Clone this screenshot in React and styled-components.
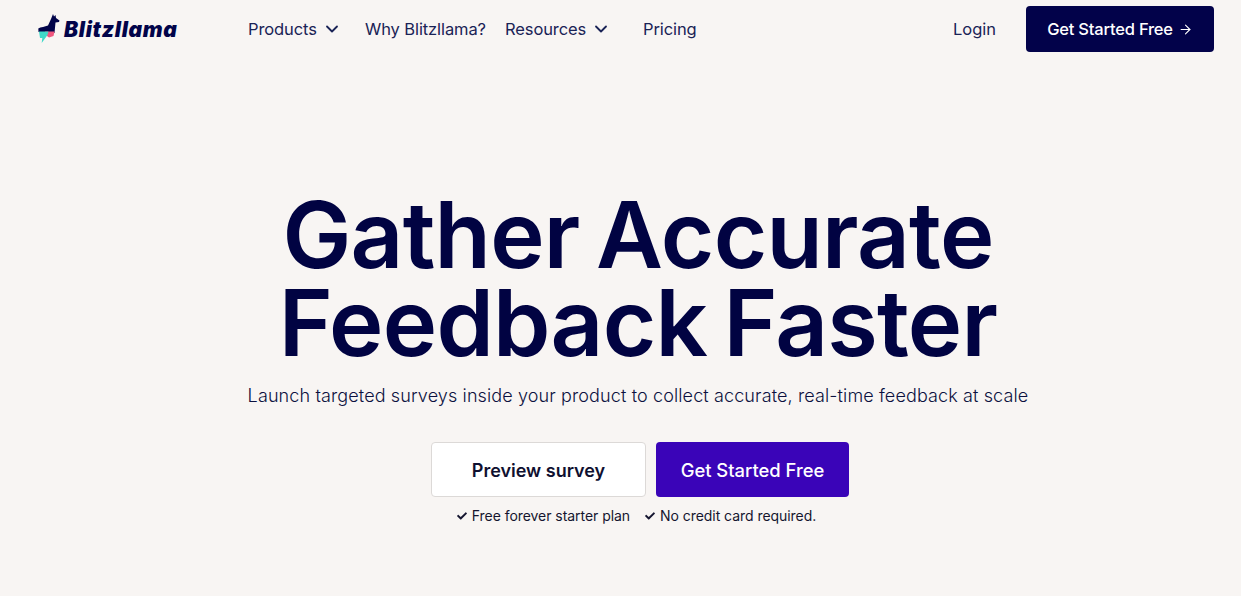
import React from 'react'
import styled, { createGlobalStyle } from 'styled-components'
import { ChevronDown, ArrowRight } from 'lucide-react'
import { FaCheck } from 'react-icons/fa'

const GlobalStyle = createGlobalStyle`
  html, body {
    margin: 0;
    padding: 0;
    background: #f8f5f3;
  }
  * {
    box-sizing: border-box;
  }
`;

const LlamaMark = () => (
  <svg width="23" height="30" viewBox="0 0 23 30">
    <path d="M0.3 14.5 Q2 13 5 13 L10 11.5 L13 5 L15 0 L16 2.5 L17.5 1 L18 4 L21.5 6.5 L21 8 L17.5 8.5 L16.5 19 L8 18 L0.5 18 Z" fill="#02044a" />
    <path d="M7 17.5 L16.5 17.5 L15.5 22 L11 23.5 L9 22 Z" fill="#f0567e" />
    <path d="M1 17.5 L10.5 17.5 L9.5 21 L3.7 29 L4.3 24 L2 24 Z" fill="#3fd9c8" />
  </svg>
)

const App = () => {
  return (
    <>
      <GlobalStyle />
      <Page>
        <Header>
          <Logo>
            <LlamaMark />
            <LogoText>Blitzllama</LogoText>
          </Logo>
          <Nav>
            <NavItem $width={117}>Products <ChevronDown size={20} strokeWidth={2.2} /></NavItem>
            <NavItem $width={140}>Why Blitzllama?</NavItem>
            <NavItem $width={138}>Resources <ChevronDown size={20} strokeWidth={2.2} /></NavItem>
            <NavItem>Pricing</NavItem>
          </Nav>
          <Actions>
            <Login>Login</Login>
            <HeaderButton>Get Started Free <ArrowRight size={15} strokeWidth={1.75} /></HeaderButton>
          </Actions>
        </Header>
        <Hero>
          <Title>Gather Accurate<br />Feedback Faster</Title>
          <Subtitle>Launch targeted surveys inside your product to collect accurate, real-time feedback at scale</Subtitle>
          <Buttons>
            <PreviewButton>Preview survey</PreviewButton>
            <StartButton>Get Started Free</StartButton>
          </Buttons>
          <Notes>
            <Note><FaCheck size={10} />Free forever starter plan</Note>
            <Note><FaCheck size={10} />No credit card required.</Note>
          </Notes>
        </Hero>
      </Page>
    </>
  )
}

export default App;

const Page = styled.div`
  width: 100%;
  height: 596px;
  overflow: hidden;
  background: #f8f5f3;
  font-family: 'Inter', 'Liberation Sans', sans-serif;
  color: #010342;
`;

const Header = styled.header`
  display: flex;
  align-items: center;
  height: 58px;
  padding: 0 27px 0 38px;
`;

const Logo = styled.div`
  display: flex;
  align-items: center;
  gap: 3px;
  width: 210px;
`;

const LogoText = styled.span`
  font-family: 'Inter', sans-serif;
  font-size: 21px;
  font-weight: 900;
  font-style: italic;
  letter-spacing: 0.7px;
  color: #02044a;
`;

const Nav = styled.nav`
  display: flex;
  align-items: center;
`;

const NavItem = styled.a`
  display: flex;
  align-items: center;
  gap: 5px;
  width: ${({ $width }) => ($width ? `${$width}px` : 'auto')};
  font-size: 16.5px;
  color: #1a2356;
  letter-spacing: -0.1px;
`;

const Actions = styled.div`
  display: flex;
  align-items: center;
  gap: 30px;
  margin-left: auto;
`;

const Login = styled.a`
  font-size: 16.5px;
  font-weight: 400;
  color: #1a2356;
`;

const HeaderButton = styled.button`
  display: flex;
  align-items: center;
  justify-content: center;
  gap: 5px;
  width: 188px;
  height: 46px;
  border: 0;
  border-radius: 4px;
  background: #02024a;
  color: #fff;
  font-family: inherit;
  font-size: 16.5px;
  font-weight: 500;
  letter-spacing: -0.2px;
`;

const Hero = styled.main`
  display: flex;
  flex-direction: column;
  align-items: center;
  padding: 133px 0 0 35px;
`;

const Title = styled.h1`
  margin: 0;
  font-size: 92px;
  line-height: 88px;
  font-weight: 600;
  letter-spacing: -0.75px;
  word-spacing: -6px;
  text-align: center;
  color: #010342;
`;

const Subtitle = styled.p`
  margin: 16px 0 0;
  font-size: 18px;
  line-height: 26px;
  font-weight: 300;
  letter-spacing: 0.12px;
  color: #0c1140;
`;

const Buttons = styled.div`
  display: flex;
  gap: 10px;
  margin: 33px 0 0 4px;
`;

const BaseButton = styled.button`
  height: 55px;
  padding: 2px 0 0;
  border-radius: 4px;
  font-family: inherit;
  font-size: 18px;
  font-weight: 500;
`;

const PreviewButton = styled(BaseButton)`
  width: 215px;
  border: 1px solid #dcd9d7;
  background: #fff;
  color: #0f1030;
  font-weight: 600;
`;

const StartButton = styled(BaseButton)`
  width: 193px;
  padding: 0;
  border: 0;
  background: #3a04b8;
  color: #fff;
  font-size: 18.4px;
`;

const Notes = styled.div`
  display: flex;
  gap: 15px;
  margin: 10px 3px 0 0;
`;

const Note = styled.span`
  display: flex;
  align-items: center;
  gap: 5px;
  font-size: 14px;
  line-height: 18px;
  font-weight: 400;
  letter-spacing: -0.05px;
  color: #15152f;
`;
